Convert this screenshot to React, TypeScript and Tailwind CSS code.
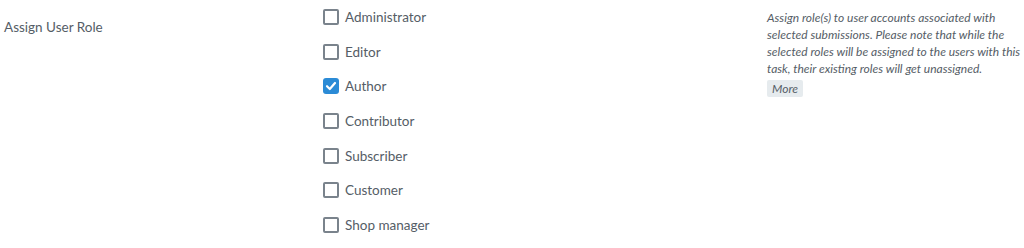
import React from "react";

const roles = [
  { name: "Administrator", checked: false },
  { name: "Editor", checked: false },
  { name: "Author", checked: true },
  { name: "Contributor", checked: false },
  { name: "Subscriber", checked: false },
  { name: "Customer", checked: false },
  { name: "Shop manager", checked: false },
];

function Box({ checked }: { checked: boolean }) {
  if (checked) {
    return (
      <span className="flex h-[16px] w-[16px] shrink-0 items-center justify-center rounded-[3px] bg-[#2b8bd6]">
        <svg width="12" height="12" viewBox="0 0 12 12">
          <path d="M2 6.2 L4.8 9 L10 3" stroke="white" strokeWidth="2.2" fill="none" strokeLinecap="round" strokeLinejoin="round" />
        </svg>
      </span>
    );
  }
  return <span className="block h-[16px] w-[16px] shrink-0 rounded-[2px] border-2 border-[#7a838c] bg-white" />;
}

export default function App() {
  return (
    <div className="flex h-[248px] w-[1024px] overflow-hidden bg-white text-[#555d66]" style={{ fontFamily: 'Lato, "Open Sans", sans-serif' }}>
      <div className="w-[319px] shrink-0 pl-[4px] pt-[17px] text-[13.5px] leading-[20px]">Assign User Role</div>
      <div className="flex w-[448px] shrink-0 flex-col pt-[9px]">
        {roles.map((r) => (
          <label key={r.name} className="flex h-[34.67px] shrink-0 items-start gap-[6px] pl-[4px] text-[13.5px] leading-[18px]">
            <Box checked={r.checked} />
            <span className="-mt-[1px]">{r.name}</span>
          </label>
        ))}
      </div>
      <div className="w-[256px] shrink-0 pt-[9px] text-[12px] italic leading-[17px] text-[#555d66]">
        <p>Assign role(s) to user accounts associated with selected submissions. Please note that while the selected roles will be assigned to the users with this task, their existing roles will get unassigned.</p>
        <span className="mt-[3px] inline-block rounded-[2px] bg-[#e6ebee] px-[5px] leading-[17px]">More</span>
      </div>
    </div>
  );
}
